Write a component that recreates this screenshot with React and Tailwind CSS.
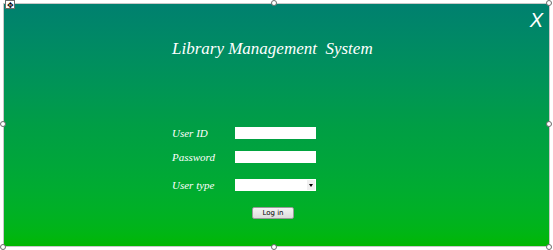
import React from 'react';

const Handle = ({ className }) => (
  <div className={`absolute w-[6px] h-[6px] rounded-full border border-[#6b6b6b] bg-white ${className}`} />
);

const Field = ({ label, children, className }) => (
  <div className={`flex items-center h-[12px] ${className}`}>
    <span className="w-[63px] text-[11px] italic leading-none text-white [font-family:'Liberation_Serif',serif]">
      {label}
    </span>
    {children}
  </div>
);

const App = () => {
  return (
    <div className="relative w-[553px] h-[250px] bg-white pt-[3px] pl-[3px]">
      <div className="w-[547px] h-[244px] border border-[#c8c8c8] bg-gradient-to-b from-[#00806f] via-[#009e45] to-[#00b800] flex flex-col">
        <div className="flex justify-end pr-[6px] pt-[6px] h-[28px]">
          <span className="text-[20px] leading-none italic text-white [font-family:'Liberation_Sans',sans-serif]">X</span>
        </div>

        <div className="pl-[168px] mt-[6px] h-[22px] text-[17px] leading-[22px] italic text-white [font-family:'Liberation_Serif',serif] whitespace-pre">
          Library Management  System
        </div>

        <div className="pl-[168px] flex flex-col">
          <Field label="User ID" className="mt-[67px]">
            <div className="w-[81px] h-[12px] bg-white" />
          </Field>
          <Field label="Password" className="mt-[12px]">
            <div className="w-[81px] h-[12px] bg-white" />
          </Field>
          <Field label="User type" className="mt-[16px]">
            <div className="w-[81px] h-[12px] bg-white flex justify-end items-center pr-[1px]">
              <div className="w-[8px] h-[10px] bg-[#f0f0f0] flex items-center justify-center">
                <div className="w-0 h-0 border-l-[2px] border-r-[2px] border-t-[3px] border-l-transparent border-r-transparent border-t-black" />
              </div>
            </div>
          </Field>
          <div className="mt-[16px] pl-[80px]">
            <button className="w-[42px] h-[12px] border border-[#9a9a9a] rounded-[2px] bg-gradient-to-b from-[#f4f4f4] to-[#dcdcdc] text-[7px] leading-none text-black [font-family:'DejaVu_Sans',sans-serif] flex items-center justify-center">
              Log in
            </button>
          </div>
        </div>
      </div>

      <div className="absolute left-[5px] top-0 w-[10px] h-[9px] border border-[#6b6b6b] bg-white flex items-center justify-center">
        <span className="text-[8px] leading-none text-black">✥</span>
      </div>
      <Handle className="left-[271px] top-0" />
      <Handle className="left-[546px] top-0" />
      <Handle className="left-0 top-[121px]" />
      <Handle className="left-[546px] top-[121px]" />
      <Handle className="left-0 top-[244px]" />
      <Handle className="left-[271px] top-[244px]" />
      <Handle className="left-[546px] top-[244px]" />
    </div>
  );
};

export default App;
